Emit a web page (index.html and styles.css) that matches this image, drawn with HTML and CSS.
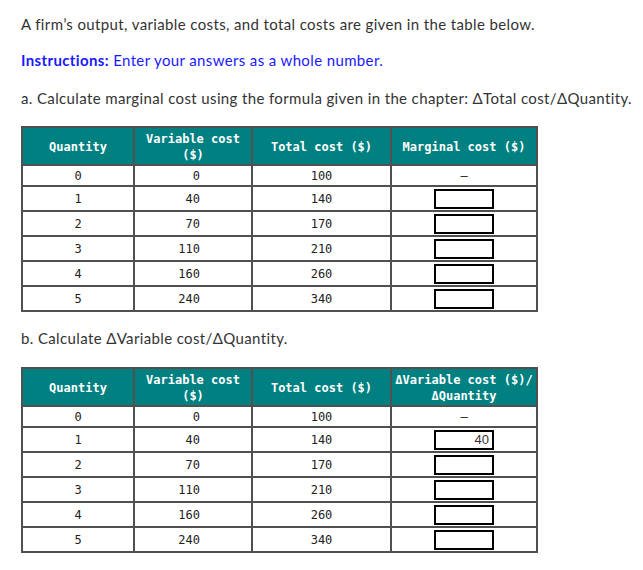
FILE: index.html
```html
<!DOCTYPE html>
<html>
<head>
<meta charset="utf-8">
<link rel="stylesheet" href="styles.css">
</head>
<body>
<div class="page">
  <p class="intro">A firm’s output, variable costs, and total costs are given in the table below.</p>
  <p class="instr"><strong>Instructions:</strong> Enter your answers as a whole number.</p>
  <p class="part">a. Calculate marginal cost using the formula given in the chapter: ΔTotal cost/ΔQuantity.</p>
  <table class="grid">
    <colgroup><col class="c1"><col class="c2"><col class="c3"><col class="c4"></colgroup>
    <thead>
      <tr><th>Quantity</th><th>Variable cost<br>($)</th><th>Total cost ($)</th><th>Marginal cost ($)</th></tr>
    </thead>
    <tbody>
      <tr class="first"><td>0</td><td class="vc">0</td><td>100</td><td>–</td></tr>
      <tr><td>1</td><td class="vc">40</td><td>140</td><td><input class="ans" type="text"></td></tr>
      <tr><td>2</td><td class="vc">70</td><td>170</td><td><input class="ans" type="text"></td></tr>
      <tr><td>3</td><td class="vc">110</td><td>210</td><td><input class="ans" type="text"></td></tr>
      <tr><td>4</td><td class="vc">160</td><td>260</td><td><input class="ans" type="text"></td></tr>
      <tr><td>5</td><td class="vc">240</td><td>340</td><td><input class="ans" type="text"></td></tr>
    </tbody>
  </table>
  <p class="part partb">b. Calculate ΔVariable cost/ΔQuantity.</p>
  <table class="grid">
    <colgroup><col class="c1"><col class="c2"><col class="c3"><col class="c4"></colgroup>
    <thead>
      <tr><th>Quantity</th><th>Variable cost<br>($)</th><th>Total cost ($)</th><th>ΔVariable cost ($)/<br>ΔQuantity</th></tr>
    </thead>
    <tbody>
      <tr class="first"><td>0</td><td class="vc">0</td><td>100</td><td>–</td></tr>
      <tr><td>1</td><td class="vc">40</td><td>140</td><td><input class="ans" type="text" value="40"></td></tr>
      <tr><td>2</td><td class="vc">70</td><td>170</td><td><input class="ans" type="text"></td></tr>
      <tr><td>3</td><td class="vc">110</td><td>210</td><td><input class="ans" type="text"></td></tr>
      <tr><td>4</td><td class="vc">160</td><td>260</td><td><input class="ans" type="text"></td></tr>
      <tr><td>5</td><td class="vc">240</td><td>340</td><td><input class="ans" type="text"></td></tr>
    </tbody>
  </table>
</div>
</body>
</html>
```
FILE: styles.css
```css
html, body {
  margin: 0;
  padding: 0;
  background: #fff;
}
.page {
  padding: 14px 0 0 21px;
  font-family: Lato, "Open Sans", sans-serif;
  font-size: 15px;
  letter-spacing: 0.37px;
  color: #333;
}
p {
  margin: 0;
  line-height: 20px;
}
.intro { margin-bottom: 16px; }
.instr { color: #1a1aff; margin-bottom: 18px; }
.instr strong { font-weight: 700; }
.part { margin-bottom: 18px; }
.partb { margin-top: 16px; margin-bottom: 19px; }

.grid {
  border-collapse: collapse;
  table-layout: fixed;
  width: 517px;
  border: 2px solid #505050;
  font-family: "DejaVu Sans Mono", monospace;
  font-size: 12px;
  letter-spacing: 0;
}
.c1 { width: 112px; }
.c2 { width: 118px; }
.c3 { width: 139px; }
.c4 { width: 146px; }
.grid th, .grid td {
  border: 2px solid #505050;
  text-align: center;
  padding: 0;
}
.grid th {
  background: #008080;
  color: #fff;
  font-weight: 700;
  line-height: 16px;
  height: 35px;
  padding-top: 1px;
}
.grid td {
  height: 23px;
  color: #222;
  line-height: 14px;
}
.grid tr.first td { height: 19px; }
.grid td.vc {
  text-align: right;
  padding-right: 51px;
}
.ans {
  box-sizing: border-box;
  width: 60px;
  height: 20px;
  border: 2px solid #000;
  margin: 0;
  padding: 0 3px;
  text-align: right;
  font-family: "Liberation Sans", Arial, sans-serif;
  font-size: 13px;
  color: #333;
  vertical-align: middle;
  background: #fff;
}
```
